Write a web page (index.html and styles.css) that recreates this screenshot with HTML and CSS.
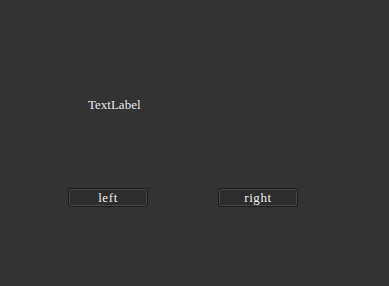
FILE: index.html
```html
<!DOCTYPE html>
<html>
<head>
<meta charset="utf-8">
<link rel="stylesheet" href="styles.css">
</head>
<body>
<div class="form">
  <div class="label">TextLabel</div>
  <div class="buttons">
    <button class="btn">left</button>
    <button class="btn">right</button>
  </div>
</div>
</body>
</html>
```
FILE: styles.css
```css
html, body {
  margin: 0;
  padding: 0;
  width: 389px;
  height: 286px;
  overflow: hidden;
}
body {
  background-color: #333333;
  background-image: radial-gradient(circle at 0.5px 0.5px, #1a1a1a 0.6px, transparent 1px);
  background-size: 20px 20px;
  background-position: 9px 8px;
  font-family: "Liberation Serif", "DejaVu Serif", serif;
  color: #e8e8e8;
}
.form {
  display: flex;
  flex-direction: column;
  padding-top: 98px;
}
.label {
  padding-left: 88px;
  font-size: 13px;
  line-height: 14px;
  height: 14px;
}
.buttons {
  display: flex;
  gap: 70px;
  padding-left: 68px;
  margin-top: 76px;
}
.btn {
  width: 80px;
  height: 19px;
  box-sizing: border-box;
  margin: 0;
  padding: 1px 0 0 0;
  border: 1px solid #1c1c1c;
  border-radius: 3px;
  background: #2d2d2d;
  box-shadow: inset 0 0 0 1px #474747;
  color: #ececec;
  font-family: "Liberation Serif", "DejaVu Serif", serif;
  font-size: 13px;
  letter-spacing: 0.6px;
  line-height: 16px;
  text-align: center;
}
```
